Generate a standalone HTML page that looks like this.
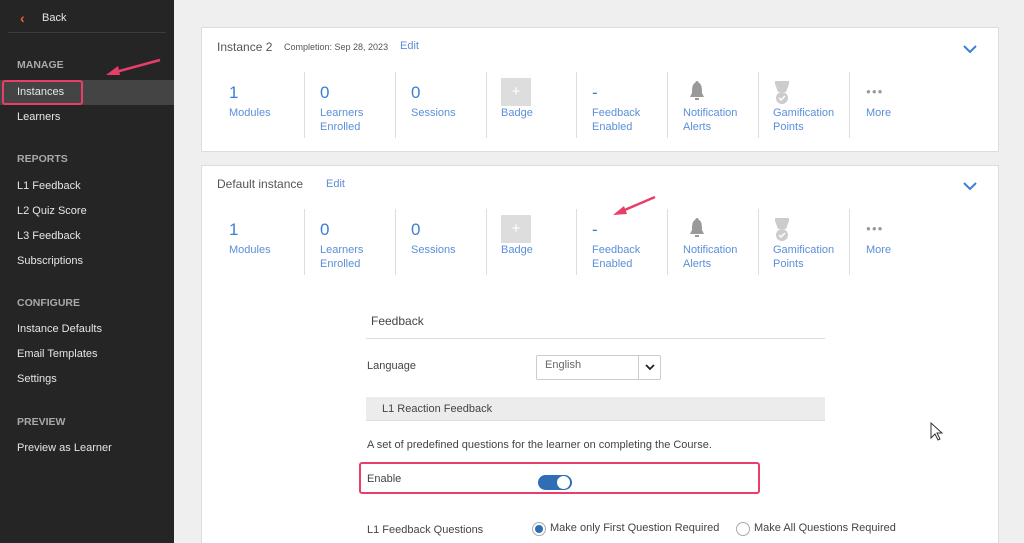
<!DOCTYPE html>
<html><head><meta charset="utf-8"><style>
*{margin:0;padding:0;box-sizing:border-box}
html,body{width:1024px;height:543px;overflow:hidden}
body{background:#efefef;font-family:"Liberation Sans",sans-serif;position:relative}
.a{position:absolute;white-space:nowrap}
#sb{position:absolute;left:0;top:0;width:174px;height:543px;background:#252525}
.s{position:absolute;left:17px;color:#e6e6e6;font-size:11px}
.h{position:absolute;left:17px;color:#a9a9a9;font-size:10.5px;font-weight:bold}
.card{position:absolute;left:201px;width:798px;background:#fff;border:1px solid #ddd}
.n{position:absolute;color:#3d7fd6;font-size:17px}
.l{position:absolute;color:#5b8fd9;font-size:11px;line-height:14px}
.d{position:absolute;width:1px;height:66px;background:#ddd}
.t{position:absolute;color:#444;font-size:11px}
.dots{position:absolute;color:#999;font-size:8px;letter-spacing:1px}
</style></head><body>
<div id="sb">
<div class="a" style="left:20px;top:10px;color:#e8643c;font-size:14px;font-weight:bold">&#8249;</div>
<div class="s" style="left:42px;top:12px">Back</div>
<div class="a" style="left:8px;top:32px;width:158px;height:1px;background:#3c3c3c"></div>
<div class="h" style="top:59px">MANAGE</div>
<div class="a" style="left:0;top:80px;width:174px;height:25px;background:#444"></div>
<div class="a" style="left:2px;top:80px;width:81px;height:25px;border:2px solid #e83e69;border-radius:3px"></div>
<div class="s" style="top:86px">Instances</div>
<div class="s" style="top:111px">Learners</div>
<div class="h" style="top:153px">REPORTS</div>
<div class="s" style="top:180px">L1 Feedback</div>
<div class="s" style="top:205px">L2 Quiz Score</div>
<div class="s" style="top:230px">L3 Feedback</div>
<div class="s" style="top:255px">Subscriptions</div>
<div class="h" style="top:297px">CONFIGURE</div>
<div class="s" style="top:323px">Instance Defaults</div>
<div class="s" style="top:348px">Email Templates</div>
<div class="s" style="top:373px">Settings</div>
<div class="h" style="top:416px">PREVIEW</div>
<div class="s" style="top:442px">Preview as Learner</div>
</div>

<div class="card" style="top:27px;height:125px">
<div class="a" style="left:15px;top:12px;font-size:12px;color:#555">Instance 2</div>
<div class="a" style="left:82px;top:14px;font-size:9px;color:#555">Completion: Sep 28, 2023</div>
<div class="a" style="left:198px;top:12px;font-size:11px;color:#5b8fd9">Edit</div>
</div>
<div class="card" style="top:165px;height:390px">
<div class="a" style="left:15px;top:11px;font-size:12px;color:#555">Default instance</div>
<div class="a" style="left:124px;top:12px;font-size:11px;color:#5b8fd9">Edit</div>
</div>

<svg class="a" style="left:962px;top:44px" width="16" height="10"><path d="M2 2l6 6 6-6" fill="none" stroke="#3d7fd6" stroke-width="2"/></svg>
<svg class="a" style="left:962px;top:181px" width="16" height="10"><path d="M2 2l6 6 6-6" fill="none" stroke="#3d7fd6" stroke-width="2"/></svg>

<!-- stats 1 -->
<div class="n" style="left:229px;top:83px">1</div><div class="l" style="left:229px;top:106px">Modules</div>
<div class="d" style="left:304px;top:72px"></div>
<div class="n" style="left:320px;top:83px">0</div><div class="l" style="left:320px;top:106px">Learners<br>Enrolled</div>
<div class="d" style="left:395px;top:72px"></div>
<div class="n" style="left:411px;top:83px">0</div><div class="l" style="left:411px;top:106px">Sessions</div>
<div class="d" style="left:486px;top:72px"></div>
<div class="a" style="left:501px;top:78px;width:30px;height:28px;background:#ddd;color:#fff;font-size:15px;text-align:center;line-height:28px">+</div>
<div class="l" style="left:501px;top:106px">Badge</div>
<div class="d" style="left:576px;top:72px"></div>
<div class="n" style="left:592px;top:83px">-</div><div class="l" style="left:592px;top:106px">Feedback<br>Enabled</div>
<div class="d" style="left:667px;top:72px"></div>
<svg class="a" style="left:688px;top:80px" width="18" height="24"><path d="M9 1a1.5 1.5 0 0 1 1.5 1.5C14 4 14 9 14 13l2 4H2l2-4c0-4 0-9 3.5-10.5A1.5 1.5 0 0 1 9 1z" fill="#999"/><rect x="7" y="18" width="4" height="2" fill="#999"/></svg>
<div class="l" style="left:683px;top:106px">Notification<br>Alerts</div>
<div class="d" style="left:758px;top:72px"></div>
<svg class="a" style="left:773px;top:80px" width="18" height="26"><path d="M2 1h14v3l-3 8H5L2 4z" fill="#ccc"/><circle cx="9" cy="18" r="6" fill="#ccc"/><path d="M6 18l2 2 4-4" fill="none" stroke="#fff" stroke-width="1.5"/></svg>
<div class="l" style="left:773px;top:106px">Gamification<br>Points</div>
<div class="d" style="left:849px;top:72px"></div>
<div class="dots" style="left:866px;top:87px">●●●</div>
<div class="l" style="left:866px;top:106px">More</div>

<!-- stats 2 -->
<div class="n" style="left:229px;top:220px">1</div><div class="l" style="left:229px;top:243px">Modules</div>
<div class="d" style="left:304px;top:209px"></div>
<div class="n" style="left:320px;top:220px">0</div><div class="l" style="left:320px;top:243px">Learners<br>Enrolled</div>
<div class="d" style="left:395px;top:209px"></div>
<div class="n" style="left:411px;top:220px">0</div><div class="l" style="left:411px;top:243px">Sessions</div>
<div class="d" style="left:486px;top:209px"></div>
<div class="a" style="left:501px;top:215px;width:30px;height:28px;background:#ddd;color:#fff;font-size:15px;text-align:center;line-height:28px">+</div>
<div class="l" style="left:501px;top:243px">Badge</div>
<div class="d" style="left:576px;top:209px"></div>
<div class="n" style="left:592px;top:220px">-</div><div class="l" style="left:592px;top:243px">Feedback<br>Enabled</div>
<div class="d" style="left:667px;top:209px"></div>
<svg class="a" style="left:688px;top:217px" width="18" height="24"><path d="M9 1a1.5 1.5 0 0 1 1.5 1.5C14 4 14 9 14 13l2 4H2l2-4c0-4 0-9 3.5-10.5A1.5 1.5 0 0 1 9 1z" fill="#999"/><rect x="7" y="18" width="4" height="2" fill="#999"/></svg>
<div class="l" style="left:683px;top:243px">Notification<br>Alerts</div>
<div class="d" style="left:758px;top:209px"></div>
<svg class="a" style="left:773px;top:217px" width="18" height="26"><path d="M2 1h14v3l-3 8H5L2 4z" fill="#ccc"/><circle cx="9" cy="18" r="6" fill="#ccc"/><path d="M6 18l2 2 4-4" fill="none" stroke="#fff" stroke-width="1.5"/></svg>
<div class="l" style="left:773px;top:243px">Gamification<br>Points</div>
<div class="d" style="left:849px;top:209px"></div>
<div class="dots" style="left:866px;top:224px">●●●</div>
<div class="l" style="left:866px;top:243px">More</div>

<!-- feedback form -->
<div class="t" style="left:371px;top:314px;font-size:12px">Feedback</div>
<div class="a" style="left:366px;top:338px;width:459px;height:1px;background:#ddd"></div>
<div class="t" style="left:367px;top:360px">Language</div>
<div class="a" style="left:536px;top:355px;width:125px;height:25px;border:1px solid #ccc;border-radius:2px"></div>
<div class="a" style="left:638px;top:356px;width:1px;height:23px;background:#ccc"></div>
<div class="a" style="left:545px;top:359px;font-size:11px;color:#666">English</div>
<svg class="a" style="left:645px;top:364px" width="10" height="7"><path d="M1 1l4 4 4-4" fill="none" stroke="#222" stroke-width="1.8"/></svg>
<div class="a" style="left:366px;top:397px;width:459px;height:24px;background:#ececec;border-bottom:1px solid #ddd"></div>
<div class="t" style="left:382px;top:403px">L1 Reaction Feedback</div>
<div class="t" style="left:367px;top:439px">A set of predefined questions for the learner on completing the Course.</div>
<div class="a" style="left:359px;top:462px;width:401px;height:32px;border:2px solid #e83e69;border-radius:3px"></div>
<div class="t" style="left:367px;top:473px">Enable</div>
<div class="a" style="left:538px;top:475px;width:34px;height:15px;background:#2f6db5;border-radius:8px"></div>
<div class="a" style="left:557px;top:476px;width:13px;height:13px;background:#fff;border-radius:50%"></div>
<div class="t" style="left:367px;top:524px">L1 Feedback Questions</div>
<div class="a" style="left:532px;top:522px;width:14px;height:14px;border:1px solid #aaa;border-radius:50%;background:#fff"></div>
<div class="a" style="left:535px;top:525px;width:8px;height:8px;background:#2f6db5;border-radius:50%"></div>
<div class="t" style="left:550px;top:522px">Make only First Question Required</div>
<div class="a" style="left:736px;top:522px;width:14px;height:14px;border:1px solid #aaa;border-radius:50%;background:#fff"></div>
<div class="t" style="left:754px;top:522px">Make All Questions Required</div>

<svg class="a" style="left:930px;top:422px" width="14" height="20"><path d="M1 1v15l4-4 3 6 2-1-3-6h5z" fill="#fff" stroke="#333" stroke-width="1"/></svg>

<svg class="a" style="left:0;top:0" width="1024" height="543">
<path d="M160 60L112 73" stroke="#e83e69" stroke-width="2.5" fill="none"/>
<path d="M106 75l12-9 2 9z" fill="#e83e69"/>
<path d="M655 197L620 212" stroke="#e83e69" stroke-width="2.5" fill="none"/>
<path d="M613 215l11-9 3 8z" fill="#e83e69"/>
</svg>
</body></html>
